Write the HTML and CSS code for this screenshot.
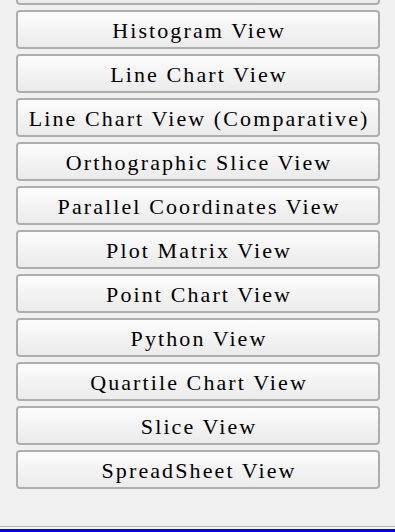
FILE: index.html
```html
<!DOCTYPE html>
<html>
<head>
<meta charset="utf-8">
<link rel="stylesheet" href="styles.css">
</head>
<body>
<div class="page">
  <div class="list">
    <button class="btn btn-partial"><span class="label">Bar Chart View</span></button>
    <button class="btn"><span class="label">Histogram View</span></button>
    <button class="btn"><span class="label">Line Chart View</span></button>
    <button class="btn"><span class="label">Line Chart View (Comparative)</span></button>
    <button class="btn"><span class="label">Orthographic Slice View</span></button>
    <button class="btn"><span class="label">Parallel Coordinates View</span></button>
    <button class="btn"><span class="label">Plot Matrix View</span></button>
    <button class="btn"><span class="label">Point Chart View</span></button>
    <button class="btn"><span class="label">Python View</span></button>
    <button class="btn"><span class="label">Quartile Chart View</span></button>
    <button class="btn"><span class="label">Slice View</span></button>
    <button class="btn"><span class="label">SpreadSheet View</span></button>
  </div>
  <div class="footer"></div>
</div>
</body>
</html>
```
FILE: styles.css
```css
html, body {
  margin: 0;
  padding: 0;
  background: #f0f0f0;
  overflow: hidden;
}
.page {
  height: 532px;
  display: flex;
  flex-direction: column;
  overflow: hidden;
}
.list {
  display: flex;
  flex-direction: column;
  gap: 5px;
  margin-top: -34px;
  padding-left: 16px;
  width: 364px;
}
.btn {
  box-sizing: border-box;
  height: 39px;
  width: 364px;
  border: 2px solid #adadad;
  border-radius: 4px;
  background: linear-gradient(to bottom, #fdfdfd 0%, #f3f3f3 50%, #ebebeb 100%);
  padding: 0 0 0 2.1px;
  margin: 0;
  display: flex;
  align-items: center;
  justify-content: center;
  font-family: "Liberation Serif", serif;
  font-size: 22px;
  letter-spacing: 2.1px;
  color: #000;
  white-space: nowrap;
}
.btn-partial .label {
  visibility: hidden;
}
.label {
  display: inline-block;
  transform: translateY(1px);
}
.footer {
  margin-top: auto;
  height: 6px;
  border-top: 1px solid #b4b4b4;
  box-sizing: border-box;
  background: linear-gradient(to bottom, #f8f8f8 0, #f8f8f8 2px, #0000ff 2px, #0000ff 100%);
}
```
